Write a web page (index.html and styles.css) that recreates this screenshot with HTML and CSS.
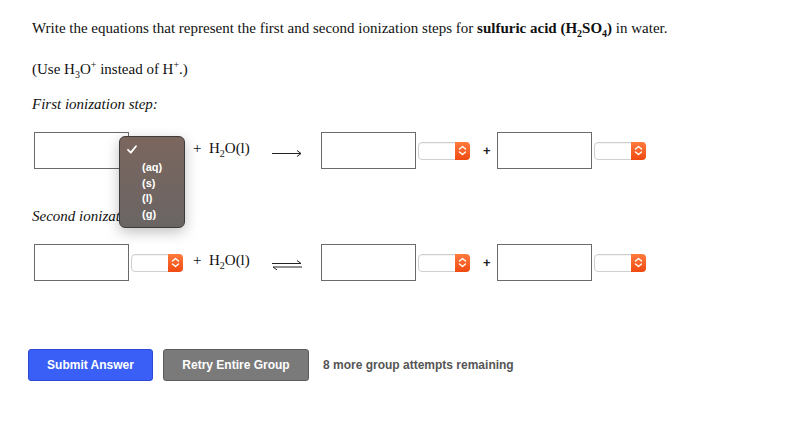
FILE: index.html
```html
<!DOCTYPE html>
<html lang="en">
<head>
<meta charset="UTF-8">
<meta name="viewport" content="width=device-width, initial-scale=1.0">
<link rel="stylesheet" href="styles.css">
</head>
<body>

<div id="page">
  <p class="prompt">Write the equations that represent the first and second ionization steps for <b>sulfuric acid (H<sub>2</sub>SO<sub>4</sub>)</b> in water.</p>
  <p class="note">(Use H<sub>3</sub>O<sup>+</sup> instead of H<sup>+</sup>.)</p>

  <p class="step">First ionization step:</p>
  <div class="eq">
    <div class="box"></div>
    <div class="select"><span class="cap"><svg width="9" height="11" viewBox="0 0 9 11"><path d="M1.5 4 L4.5 1.5 L7.5 4 M1.5 7 L4.5 9.5 L7.5 7" fill="none" stroke="#fff" stroke-width="1.4" stroke-linecap="round" stroke-linejoin="round"/></svg></span></div>
    <span class="water">+&nbsp; H<sub>2</sub>O(l)</span>
    <svg class="arrow" width="30" height="10" viewBox="0 0 30 10"><path d="M0 5.5 H29 M25 2.5 L29 5.5 L25 8.5" fill="none" stroke="#222" stroke-width="1"/></svg>
    <div class="box"></div>
    <div class="select"><span class="cap"><svg width="9" height="11" viewBox="0 0 9 11"><path d="M1.5 4 L4.5 1.5 L7.5 4 M1.5 7 L4.5 9.5 L7.5 7" fill="none" stroke="#fff" stroke-width="1.4" stroke-linecap="round" stroke-linejoin="round"/></svg></span></div>
    <span class="plus">+</span>
    <div class="box"></div>
    <div class="select"><span class="cap"><svg width="9" height="11" viewBox="0 0 9 11"><path d="M1.5 4 L4.5 1.5 L7.5 4 M1.5 7 L4.5 9.5 L7.5 7" fill="none" stroke="#fff" stroke-width="1.4" stroke-linecap="round" stroke-linejoin="round"/></svg></span></div>
  </div>

  <p class="step second">Second ionization step:</p>
  <div class="eq">
    <div class="box"></div>
    <div class="select"><span class="cap"><svg width="9" height="11" viewBox="0 0 9 11"><path d="M1.5 4 L4.5 1.5 L7.5 4 M1.5 7 L4.5 9.5 L7.5 7" fill="none" stroke="#fff" stroke-width="1.4" stroke-linecap="round" stroke-linejoin="round"/></svg></span></div>
    <span class="water">+&nbsp; H<sub>2</sub>O(l)</span>
    <svg class="arrow" width="30" height="10" viewBox="0 0 30 10"><path d="M0 3.5 H29 L25 0.5 M30 7 H1 L5 10" fill="none" stroke="#222" stroke-width="1"/></svg>
    <div class="box"></div>
    <div class="select"><span class="cap"><svg width="9" height="11" viewBox="0 0 9 11"><path d="M1.5 4 L4.5 1.5 L7.5 4 M1.5 7 L4.5 9.5 L7.5 7" fill="none" stroke="#fff" stroke-width="1.4" stroke-linecap="round" stroke-linejoin="round"/></svg></span></div>
    <span class="plus">+</span>
    <div class="box"></div>
    <div class="select"><span class="cap"><svg width="9" height="11" viewBox="0 0 9 11"><path d="M1.5 4 L4.5 1.5 L7.5 4 M1.5 7 L4.5 9.5 L7.5 7" fill="none" stroke="#fff" stroke-width="1.4" stroke-linecap="round" stroke-linejoin="round"/></svg></span></div>
  </div>

  <div class="actions">
    <button class="btn submit">Submit Answer</button>
    <button class="btn retry">Retry Entire Group</button>
    <span class="attempts">8 more group attempts remaining</span>
  </div>

  <!-- open state menu of the first select -->
  <ul class="menu">
    <li class="checked"><svg width="10" height="9" viewBox="0 0 10 9"><path d="M1 4.8 L3.8 7.6 L9 1.2" fill="none" stroke="#fff" stroke-width="1.8" stroke-linecap="round" stroke-linejoin="round"/></svg></li>
    <li>(aq)</li>
    <li>(s)</li>
    <li>(l)</li>
    <li>(g)</li>
  </ul>
</div>

</body>
</html>
```

FILE: styles.css
```css
body {
  margin: 0;
  background: #fff;
}

#page {
  position: relative;
  padding: 20px 0 0 32px;
  font-family: "Liberation Serif", "Times New Roman", serif;
  font-size: 15px;
  color: #111;
}

p {
  margin: 0;
  line-height: 16px;
}

sub, sup {
  font-size: 10px;
  line-height: 0;
}

.note {
  margin-top: 25px;
}

.step {
  margin-top: 19px;
  font-style: italic;
}

.step.second {
  margin-top: 39px;
}

.eq {
  display: flex;
  align-items: center;
  margin: 20px 0 0 2px;
  height: 37px;
}

.box {
  box-sizing: border-box;
  width: 95px;
  height: 37px;
  border: 1.5px solid #6a6a6a;
  background: #fff;
}

.select {
  box-sizing: border-box;
  display: flex;
  justify-content: flex-end;
  width: 52px;
  height: 18px;
  margin-left: 2px;
  border: 1px solid #cfcfcf;
  border-radius: 4px;
  background: #fff;
  box-shadow: inset 0 1px 1px rgba(0,0,0,.05);
}

.cap {
  display: flex;
  align-items: center;
  justify-content: center;
  width: 15px;
  margin: -1px -1px -1px 0;
  border-radius: 0 4px 4px 0;
  background: linear-gradient(#ff7b3c, #ef4a12);
}

.water {
  margin-left: 10px;
  margin-top: -4px;
}

.arrow {
  margin-left: 22px;
  margin-top: 4px;
  margin-right: 19px;
}

.plus {
  width: 20px;
  margin: 0 0 0 7px;
  text-align: center;
  font-family: "Liberation Sans", Arial, sans-serif;
  font-weight: bold;
  font-size: 13px;
  color: #222;
}

.actions {
  display: flex;
  align-items: center;
  margin: 68px 0 0 -4px;
  font-family: "Liberation Sans", Arial, sans-serif;
}

.btn {
  height: 32px;
  padding: 0 18px;
  border-radius: 3px;
  font-family: "Liberation Sans", Arial, sans-serif;
  font-size: 12px;
  font-weight: bold;
  color: #fff;
}

.submit {
  width: 125px;
  background: #3a5ff6;
  border: 1px solid #2b49d4;
}

.retry {
  width: 146px;
  margin-left: 10px;
  background: #7a7a7a;
  border: 1px solid #5c5c5c;
}

.attempts {
  margin-left: 14px;
  font-size: 12px;
  font-weight: bold;
  color: #555;
}

.menu {
  position: absolute;
  left: 119px;
  top: 136px;
  box-sizing: border-box;
  width: 66px;
  height: 92px;
  margin: 0;
  padding: 6px 0 0 0;
  list-style: none;
  border: 1px solid #3e3a38;
  border-radius: 6px;
  background: linear-gradient(#7b665e, #6a6564);
  box-shadow: 0 4px 14px rgba(0,0,0,.25);
  font-family: "Liberation Sans", Arial, sans-serif;
  font-size: 11px;
  font-weight: bold;
  color: #fff;
}

.menu li {
  height: 15.5px;
  line-height: 15.5px;
  padding-left: 22px;
}

.menu li.checked {
  height: 17px;
  padding-left: 7px;
}
```
